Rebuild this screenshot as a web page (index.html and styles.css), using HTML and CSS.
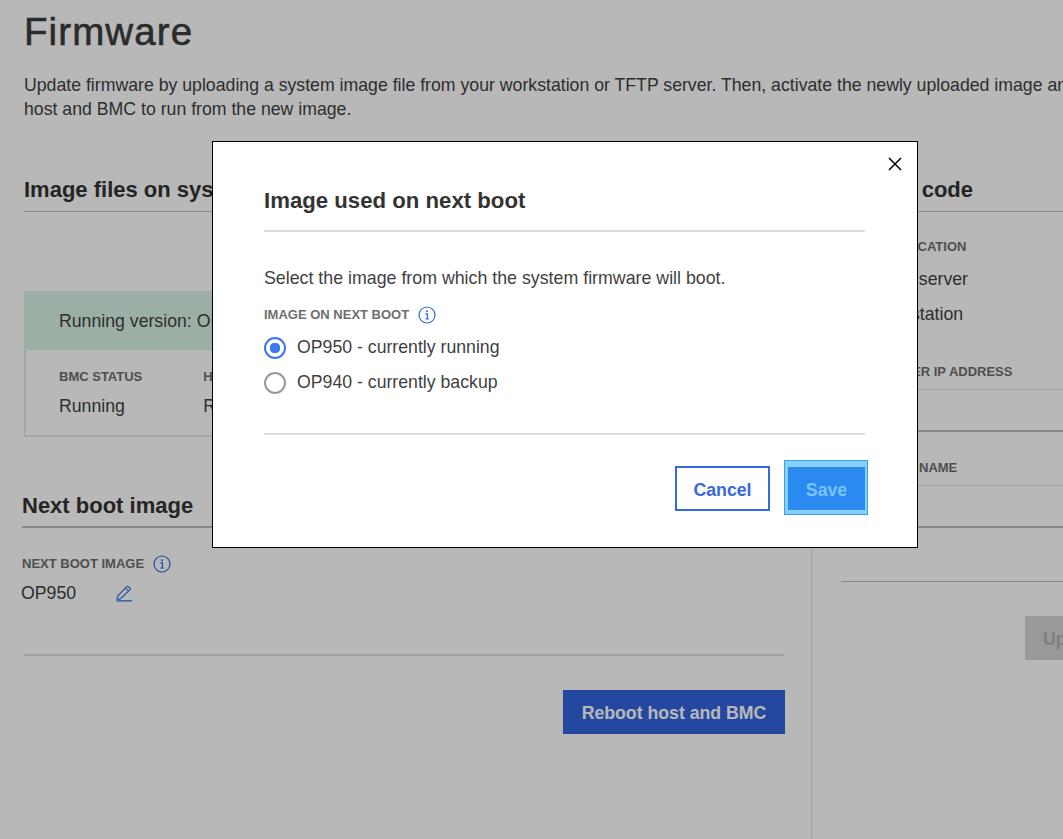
FILE: index.html
```html
<!DOCTYPE html>
<html lang="en">
<head>
    <meta charset="UTF-8">
    <meta name="viewport" content="width=device-width, initial-scale=1.0">
    <title>Firmware</title>
    <link rel="stylesheet" href="styles.css">
</head>
<body>
    <div class="page">
        <h1>Firmware</h1>
        <p class="lead">Update firmware by uploading a system image file from your workstation or TFTP server. Then, activate the newly uploaded image and reboot the host and BMC to run from the new image.</p>

        <div class="columns">
            <div class="col-left">
                <h2 class="section-title">Image files on system</h2>

                <div class="status-card">
                    <div class="status-head">Running version: OP950</div>
                    <div class="status-body">
                        <div class="status-item">
                            <div class="label">BMC STATUS</div>
                            <div class="value">Running</div>
                        </div>
                        <div class="status-item">
                            <div class="label">HOST STATUS</div>
                            <div class="value">Running</div>
                        </div>
                    </div>
                </div>

                <h2 class="section-title next-title">Next boot image</h2>
                <div class="label label-row">
                    NEXT BOOT IMAGE
                    <svg class="icon-info" viewBox="0 0 18 18"><circle cx="9" cy="9" r="8" fill="none" stroke="currentColor" stroke-width="1.2"/><path d="M7.3 7.9H9.4V13M7.2 13H11.2" fill="none" stroke="currentColor" stroke-width="1.2"/><circle cx="9" cy="5.2" r="1" fill="currentColor"/></svg>
                </div>
                <div class="value boot-value">
                    OP950
                    <svg class="icon-edit" viewBox="0 0 18 18"><path d="M1.5 12.6 11.4 2.2a1.2 1.2 0 0 1 1.7 0l1.6 1.5a1.2 1.2 0 0 1 0 1.7L5 15 1.2 15.7ZM10 3.8 13.2 7M.5 17.4H17" fill="none" stroke="currentColor" stroke-width="1.2"/></svg>
                </div>

                <div class="rule-wrap">
                    <button class="btn-primary">Reboot host and BMC</button>
                </div>
            </div>

            <div class="col-right">
                <h2 class="section-title">Update code</h2>
                <div class="label loc-label">UPLOAD LOCATION</div>
                <div class="value loc-option first-option">TFTP server</div>
                <div class="value loc-option">Workstation</div>
                <div class="label ip-label">TFTP SERVER IP ADDRESS</div>
                <div class="fake-input"></div>
                <div class="label file-label">IMAGE FILE NAME</div>
                <div class="fake-input"></div>
                <div class="upload-wrap">
                    <button class="btn-disabled">Upload firmware</button>
                </div>
            </div>
        </div>
    </div>

    <div class="backdrop"></div>

    <div class="modal">
        <svg class="icon-close" viewBox="0 0 14 14"><path d="M1 1 13 13M13 1 1 13" fill="none" stroke="#000" stroke-width="1.5"/></svg>
        <h3 class="modal-title">Image used on next boot</h3>
        <p class="modal-text">Select the image from which the system firmware will boot.</p>
        <div class="label label-row modal-label">
            IMAGE ON NEXT BOOT
            <svg class="icon-info" viewBox="0 0 18 18"><circle cx="9" cy="9" r="8" fill="none" stroke="currentColor" stroke-width="1.2"/><path d="M7.3 7.9H9.4V13M7.2 13H11.2" fill="none" stroke="currentColor" stroke-width="1.2"/><circle cx="9" cy="5.2" r="1" fill="currentColor"/></svg>
        </div>
        <div class="radio-row"><span class="radio checked"></span>OP950 - currently running</div>
        <div class="radio-row"><span class="radio"></span>OP940 - currently backup</div>
        <div class="modal-footer">
            <button class="btn-cancel">Cancel</button>
            <button class="btn-save">Save</button>
        </div>
    </div>
</body>
</html>
```

FILE: styles.css
```css
html, body {
    margin: 0;
    padding: 0;
    height: 839px;
    overflow: hidden;
}
body {
    font-family: "Liberation Sans", Arial, sans-serif;
    background-color: #fff;
    color: #3f3f3f;
    position: relative;
}
.page {
    width: 1400px;
    height: 839px;
    box-sizing: border-box;
    padding-left: 24px;
    overflow: hidden;
}
h1 {
    margin: 0;
    padding-top: 10px;
    font-size: 38.5px;
    line-height: 44px;
    font-weight: 400;
    letter-spacing: 1.1px;
    -webkit-text-stroke: 0.6px #3c3c3c;
    color: #3c3c3c;
}
.lead {
    margin: 19px 0 0;
    width: 1150px;
    font-size: 17.7px;
    line-height: 24px;
}
.columns {
    display: flex;
}
.col-left {
    width: 760px;
    padding-top: 56px;
    padding-right: 27px;
}
.col-right {
    flex: 1;
    height: 670px;
    margin-top: 56px;
    padding: 0 0 0 29px;
    border-left: 1px solid #e0e0e0;
}
.section-title {
    margin: 0;
    font-size: 22px;
    line-height: 26px;
    font-weight: 700;
    color: #333;
    padding-bottom: 8px;
    border-bottom: 1px solid #bbb;
}
.status-card {
    margin-top: 79px;
    border: 2px solid #e6e6e6;
    border-top: none;
}
.status-head {
    margin: 0 -2px;
    height: 59px;
    line-height: 61px;
    padding-left: 35px;
    background-color: #d9f3e3;
    font-size: 17.7px;
}
.status-body {
    display: flex;
    gap: 61px;
    height: 85px;
    box-sizing: border-box;
    padding: 19px 0 0 33px;
}
.label {
    font-size: 13px;
    line-height: 16px;
    font-weight: 700;
    color: #6e6e6e;
}
.value {
    font-size: 17.7px;
    line-height: 24px;
}
.status-item .value {
    margin-top: 9px;
}
.next-title {
    margin: 56px 0 0 -2px;
    padding-bottom: 7px;
    border-bottom-width: 2px;
}
.label-row {
    display: flex;
    align-items: center;
    gap: 9px;
}
.col-left > .label-row {
    margin: 27px 0 0 -2px;
}
.icon-info {
    width: 18px;
    height: 18px;
    color: #2d6be4;
}
.boot-value {
    display: flex;
    align-items: center;
    gap: 40px;
    margin: 8px 0 0 -3px;
}
.icon-edit {
    width: 17px;
    height: 18px;
    color: #2d6be4;
}
.rule-wrap {
    margin-top: 49px;
    padding-top: 34px;
    border-top: 2px solid #ddd;
    display: flex;
    justify-content: flex-end;
}
.btn-primary {
    height: 44px;
    width: 222px;
    margin-right: -1px;
    padding-top: 3px;
    border: none;
    background-color: #3264de;
    color: #fff;
    font-family: inherit;
    font-size: 17.7px;
    font-weight: 700;
}
.loc-label {
    margin-top: 27px;
}
.loc-option {
    margin-top: 11px;
    padding-left: 29px;
}
.first-option {
    margin-top: 12px;
}
.ip-label {
    margin-top: 38px;
}
.fake-input {
    width: 400px;
    height: 40px;
    margin-top: 9px;
    border-top: 1px solid #ddd;
    border-bottom: 2px solid #bbb;
}
.file-label {
    margin-top: 28px;
}
.upload-wrap {
    margin-top: 53px;
    padding-top: 34px;
    border-top: 1px solid #bbb;
    width: 400px;
}
.btn-disabled {
    height: 44px;
    width: 180px;
    margin-left: 184px;
    padding: 3px 0 0 18px;
    text-align: left;
    border: none;
    background-color: #d4d4d4;
    color: #b0b0b0;
    font-family: inherit;
    font-size: 17.7px;
    font-weight: 700;
}
.backdrop {
    position: absolute;
    inset: 0;
    background-color: rgba(0, 0, 0, 0.28);
}
.modal {
    position: absolute;
    left: 212px;
    top: 141px;
    width: 706px;
    height: 407px;
    box-sizing: border-box;
    padding: 0 52px 0 51px;
    background-color: #fff;
    border: 1px solid #000;
}
.icon-close {
    position: absolute;
    top: 15px;
    right: 15px;
    width: 14px;
    height: 14px;
}
.modal-title {
    margin: 0;
    padding: 46px 0 16px;
    font-size: 22.2px;
    line-height: 26px;
    font-weight: 700;
    color: #333;
    border-bottom: 2px solid #ddd;
}
.modal-text {
    margin: 34px 0 0;
    font-size: 17.8px;
    line-height: 24px;
}
.modal-label {
    margin-top: 15px;
    height: 20px;
}
.radio-row {
    display: flex;
    align-items: center;
    gap: 11px;
    height: 35px;
    font-size: 17.7px;
}
.modal-label + .radio-row {
    margin-top: 5px;
}
.radio {
    width: 22px;
    height: 22px;
    box-sizing: border-box;
    border: 2px solid #999;
    border-radius: 50%;
}
.radio.checked {
    border-color: #3f76ea;
    background: radial-gradient(circle, #3f76ea 0 5px, #fff 5.5px);
}
.modal-footer {
    margin-top: 33px;
    padding-top: 26px;
    border-top: 2px solid #ddd;
    display: flex;
    justify-content: flex-end;
    align-items: flex-start;
    gap: 15px;
}
.btn-cancel {
    width: 95px;
    height: 45px;
    margin-top: 5px;
    padding-top: 4px;
    background-color: #fff;
    border: 2px solid #3568e0;
    color: #3568e0;
    font-family: inherit;
    font-size: 17.7px;
    font-weight: 700;
}
.btn-save {
    width: 82px;
    height: 53px;
    margin-right: -2px;
    box-sizing: border-box;
    padding: 4px 0 0;
    background-color: #2a8af0;
    border-style: solid;
    border-color: #85d0ff;
    border-width: 6px 2px 4px 3px;
    box-shadow: 0 0 0 1px #35a2e4;
    color: #79c4ff;
    font-family: inherit;
    font-size: 17.7px;
    font-weight: 700;
}
```
